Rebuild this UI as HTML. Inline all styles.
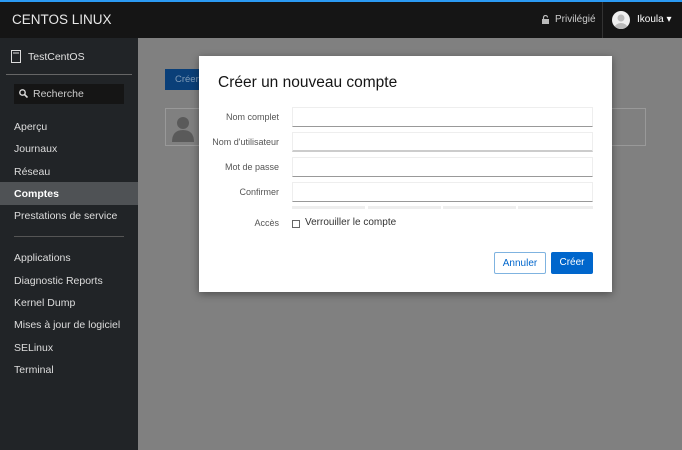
<!DOCTYPE html>
<html><head><meta charset="utf-8"><style>
*{margin:0;padding:0;box-sizing:border-box}
body{width:682px;height:450px;overflow:hidden;font-family:"Liberation Sans",sans-serif;background:#808080;position:relative}
.top{position:absolute;left:0;top:0;width:682px;height:38px;background:#151515;border-top:2px solid #2b9af3}
.top .brand{position:absolute;left:12px;top:10px;color:#e8e8e8;font-size:13.5px}
.top .priv{position:absolute;left:541px;top:12px;color:#ccc;font-size:10px}
.top .sep{position:absolute;left:602px;top:0;width:1px;height:36px;background:#333}
.top .av{position:absolute;left:612px;top:9px;width:18px;height:18px;border-radius:50%;background:#f0f0f0;overflow:hidden}
.top .user{position:absolute;left:637px;top:12px;color:#fff;font-size:10px}
.side{position:absolute;left:0;top:38px;width:138px;height:412px;background:#212427}
.side .host{position:absolute;left:28px;top:13px;color:#e0e0e0;font-size:10.5px}
.side .hline{position:absolute;left:6px;top:36px;width:126px;height:1px;background:#666}
.side .search{position:absolute;left:14px;top:46px;width:110px;height:20px;background:#151515;color:#ccc;font-size:10.5px;padding:4px 0 0 19px}
.item{position:absolute;left:14px;color:#ddd;font-size:10.5px}
.active{position:absolute;left:0;top:144px;width:138px;height:23px;background:#4f5255}
.modal{position:absolute;left:199px;top:56px;width:413px;height:236px;background:#fff;box-shadow:0 2px 8px rgba(0,0,0,.4)}
.modal h1{position:absolute;left:19px;top:18px;font-size:15.5px;font-weight:normal;color:#151515}
.lbl{position:absolute;right:333px;font-size:9px;color:#555;text-align:right}
.inp{position:absolute;left:93px;width:301px;height:20px;border:1px solid #eee;border-bottom:1px solid #999}
.bar{position:absolute;top:150px;height:3px;width:73px;background:#eee}
.btn{position:absolute;top:196px;height:22px;font-size:10px;text-align:center;line-height:21px;border-radius:2px}
</style></head><body>
<div class="top"><div class="brand">CENTOS LINUX</div>
<svg style="position:absolute;left:542px;top:13px" width="7" height="9" viewBox="0 0 7 9"><rect x="0" y="4" width="7" height="5" fill="#bbb"/><path d="M1.5 4V2.5a2 2 0 0 1 4 0" stroke="#bbb" fill="none" stroke-width="1.2"/></svg>
<div class="priv" style="left:555px">Privilégié</div><div class="sep"></div>
<div class="av"><svg width="18" height="18"><circle cx="9" cy="7" r="3.5" fill="#bbb"/><ellipse cx="9" cy="17" rx="6.5" ry="5" fill="#bbb"/></svg></div>
<div class="user">Ikoula ▾</div></div>
<div class="side">
<svg style="position:absolute;left:11px;top:12px" width="10" height="13"><rect x="0.5" y="0.5" width="9" height="12" fill="none" stroke="#ddd"/><line x1="2" y1="3" x2="8" y2="3" stroke="#ddd"/></svg>
<div class="host">TestCentOS</div><div class="hline"></div>
<div class="search"><svg style="position:absolute;left:5px;top:5px" width="9" height="9"><circle cx="3.5" cy="3.5" r="2.7" stroke="#ddd" stroke-width="1.4" fill="none"/><line x1="5.5" y1="5.5" x2="8.5" y2="8.5" stroke="#ddd" stroke-width="1.6"/></svg>Recherche</div>
<div class="active"></div>
<div class="item" style="top:83px">Aperçu</div>
<div class="item" style="top:105px">Journaux</div>
<div class="item" style="top:128px">Réseau</div>
<div class="item" style="top:150px;color:#fff;font-weight:bold">Comptes</div>
<div class="item" style="top:172px">Prestations de service</div>
<div style="position:absolute;left:14px;top:198px;width:110px;height:1px;background:#555"></div>
<div class="item" style="top:214px">Applications</div>
<div class="item" style="top:237px">Diagnostic Reports</div>
<div class="item" style="top:259px">Kernel Dump</div>
<div class="item" style="top:281px">Mises à jour de logiciel</div>
<div class="item" style="top:304px">SELinux</div>
<div class="item" style="top:326px">Terminal</div>
</div>
<div style="position:absolute;left:165px;top:69px;width:40px;height:21px;background:#0a3f78;color:#7f9bb8;font-size:9.5px;padding:5px 0 0 10px">Créer</div>
<div style="position:absolute;left:165px;top:108px;width:481px;height:38px;border:1px solid #999"></div>
<svg style="position:absolute;left:171px;top:115px" width="24" height="28"><circle cx="12" cy="8" r="6" fill="#5a5a5a"/><path d="M1 27 Q1 15 12 15 Q23 15 23 27Z" fill="#5a5a5a"/></svg>
<div class="modal"><h1>Créer un nouveau compte</h1>
<div class="lbl" style="top:56px">Nom complet</div><div class="inp" style="top:51px"></div>
<div class="lbl" style="top:81px">Nom d'utilisateur</div><div class="inp" style="top:76px;border-bottom:2px solid #ccc"></div>
<div class="lbl" style="top:106px">Mot de passe</div><div class="inp" style="top:101px"></div>
<div class="lbl" style="top:131px">Confirmer</div><div class="inp" style="top:126px"></div>
<div class="bar" style="left:93px"></div><div class="bar" style="left:169px"></div><div class="bar" style="left:244px"></div><div class="bar" style="left:319px;width:75px"></div>
<div class="lbl" style="top:162px">Accès</div>
<div style="position:absolute;left:93px;top:164px;width:8px;height:8px;border:1px solid #666"></div>
<div style="position:absolute;left:106px;top:161px;font-size:10px;color:#333">Verrouiller le compte</div>
<div class="btn" style="left:295px;width:52px;border:1px solid #7fb3e0;color:#06c">Annuler</div>
<div class="btn" style="left:352px;width:42px;background:#06c;color:#fff;line-height:22px">Créer</div>
</div>
</body></html>
